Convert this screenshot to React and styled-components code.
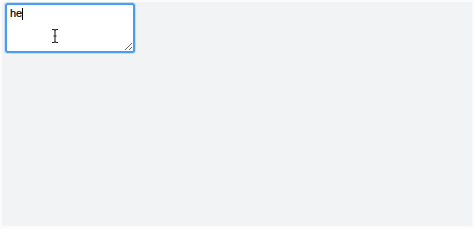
import React from "react";
import styled, { createGlobalStyle } from "styled-components";

const Global = createGlobalStyle`
  html, body { margin: 0; padding: 0; background: #ffffff; }
  body { font-family: "Liberation Sans", Arial, sans-serif; }
`;

const Page = styled.div`
  box-sizing: border-box;
  width: 474px;
  height: 229px;
  padding: 2px 2px 3px 2px;
  background: #fbfbfc;
`;

const Panel = styled.div`
  position: relative;
  box-sizing: border-box;
  height: 100%;
  background: #f2f3f5;
  border-radius: 2px;
  padding: 1px 0 0 3px;
`;

const Field = styled.div`
  position: relative;
  width: 130px;
  height: 50px;
`;

const Area = styled.textarea`
  display: block;
  box-sizing: border-box;
  width: 130px;
  height: 50px;
  margin: 0;
  padding: 2px 3px;
  border: 2px solid #4a9df0;
  border-radius: 3px;
  background: #ffffff;
  font-family: "Liberation Sans", Arial, sans-serif;
  font-size: 11px;
  line-height: 13px;
  color: #000000;
  -webkit-text-stroke: 0.2px #000;
  outline: none;
  resize: both;
  box-shadow: 0 0 0 1px rgba(74, 157, 240, 0.25);
`;

const Caret = styled.span`
  position: absolute;
  z-index: 2;
  left: 17px;
  top: 5px;
  width: 1px;
  height: 12px;
  background: #000;
`;

const Cursor = styled.svg`
  position: absolute;
  z-index: 2;
  left: 46px;
  top: 25px;
`;

export default function App() {
  return (
    <>
      <Global />
      <Page>
        <Panel>
          <Field>
            <Area defaultValue="he" readOnly />
            <Caret />
            <Cursor width="8" height="16" viewBox="0 0 8 16">
              <path
                d="M1 1.5h2l1 1 1-1h2M4 2.5v11M1 14.5h2l1-1 1 1h2M2.5 8h3"
                stroke="#ffffff"
                strokeWidth="2.6"
                fill="none"
                strokeLinecap="round"
              />
              <path
                d="M1 1.5h2l1 1 1-1h2M4 2.5v11M1 14.5h2l1-1 1 1h2M2.5 8h3"
                stroke="#222222"
                strokeWidth="1.1"
                fill="none"
              />
            </Cursor>
          </Field>
        </Panel>
      </Page>
    </>
  );
}
